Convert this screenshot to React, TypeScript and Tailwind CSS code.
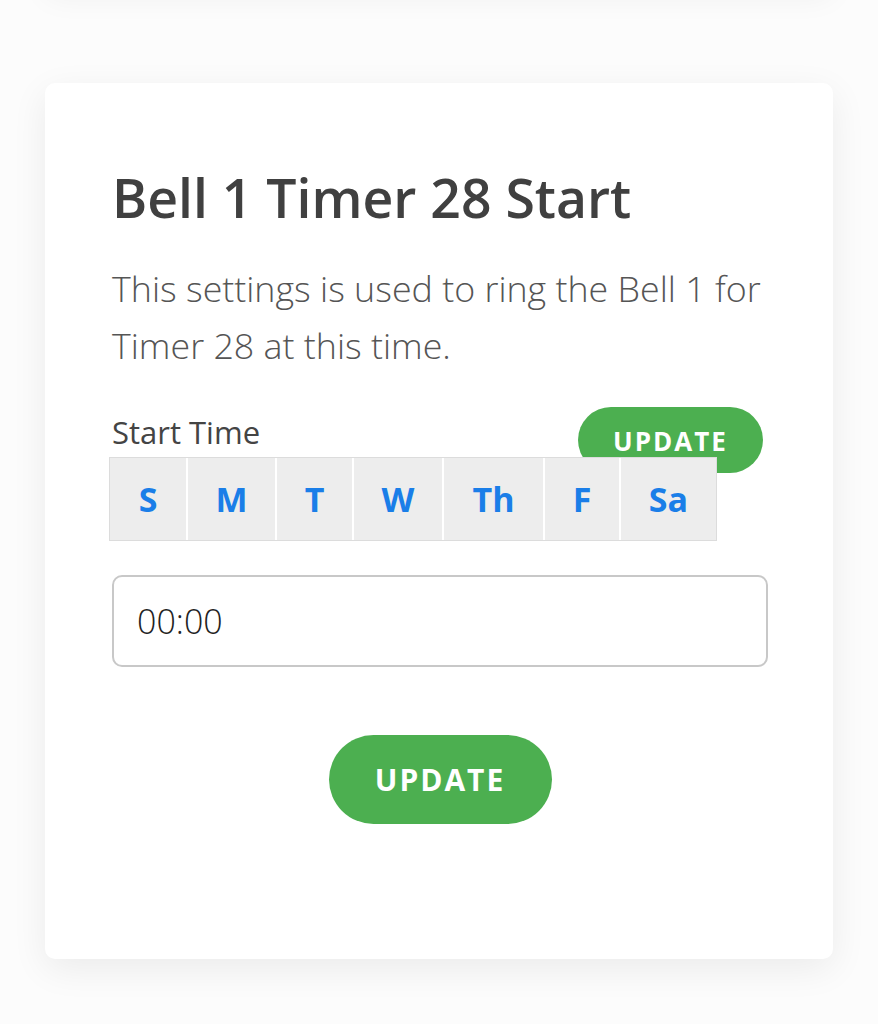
import { useState } from 'react';

const days = [
  { key: 'sun', label: 'S', w: 'w-[76px]' },
  { key: 'mon', label: 'M', w: 'w-[89px]' },
  { key: 'tue', label: 'T', w: 'w-[77px]' },
  { key: 'wed', label: 'W', w: 'w-[90px]' },
  { key: 'thu', label: 'Th', w: 'w-[101px]' },
  { key: 'fri', label: 'F', w: 'w-[76px]' },
  { key: 'sat', label: 'Sa', w: 'w-[97px]' },
];

export default function App() {
  const [time, setTime] = useState('00:00');

  return (
    <div className="min-h-screen bg-[#fcfcfc] font-['Open_Sans',sans-serif] overflow-hidden">
      {/* tail of the previous card */}
      <div className="mx-[45px] -mt-[60px] h-[50px] rounded-[10px] bg-white shadow-[0_8px_30px_rgba(0,0,0,0.05)]" />

      <div className="mx-[45px] mt-[93px] rounded-[10px] bg-white pl-[67px] pr-[65px] pt-[82px] pb-[135px] shadow-[0_10px_36px_rgba(0,0,0,0.07)]">
        <h1 className="text-[53.5px] leading-[66px] font-semibold text-[#404040]">Bell 1 Timer 28 Start</h1>

        <p className="mt-[29px] text-[35.8px] leading-[57px] font-light text-[#555]">
          This settings is used to ring the Bell 1 for Timer 28 at this time.
        </p>

        {/* Start time label + day picker */}
        <div className="mt-[33px] flex items-start justify-between">
          <label className="mt-[8px] text-[31px] leading-[34px] text-[#444]">Start Time</label>
          <button className="mr-[5px] h-[66px] w-[185px] rounded-full bg-[#4caf50] pt-[3px] text-[26px] font-bold tracking-[2px] text-white">
            UPDATE
          </button>
        </div>

        <div className="relative z-10 -mt-[16px] ml-[-3px] flex w-fit border border-[#dcdcdc] bg-white">
          {days.map((d, i) => (
            <button
              key={d.key}
              className={`${d.w} h-[82px] bg-[#ededed] text-[34px] font-bold text-[#1a7ee8] ${i > 0 ? 'border-l-2 border-white' : ''}`}
            >
              {d.label}
            </button>
          ))}
        </div>

        <input
          value={time}
          onChange={(e) => setTime(e.target.value)}
          className="mt-[34px] block h-[92px] w-full rounded-[10px] border-2 border-[#c8c8c8] px-[23px] text-[34px] font-light text-[#222] outline-none"
        />

        <div className="mt-[68px] flex justify-center">
          <button className="h-[89px] w-[223px] rounded-full bg-[#4caf50] text-[30px] font-bold tracking-[2px] text-white">
            UPDATE
          </button>
        </div>
      </div>
    </div>
  );
}
